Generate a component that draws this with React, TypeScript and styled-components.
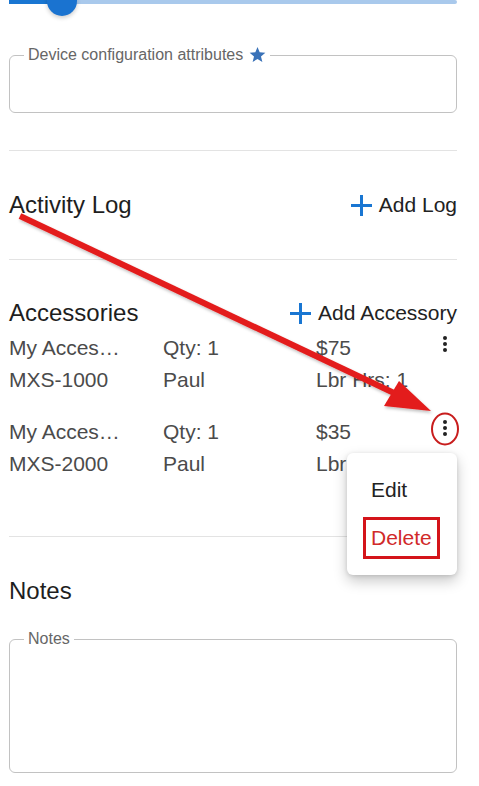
import styled, { createGlobalStyle } from "styled-components";

const GlobalStyle = createGlobalStyle`
  html, body {
    margin: 0;
    padding: 0;
    background: #fff;
    font-family: "Liberation Sans", Arial, sans-serif;
  }
`;

const Page = styled.div`
  position: relative;
  width: 479px;
  height: 786px;
  overflow: hidden;
  padding: 0 22px 0 9px;
  box-sizing: border-box;
`;

const Rail = styled.div`
  position: relative;
  height: 4px;
  background: #a9c9ec;
  border-radius: 0 2px 2px 0;
`;

const Track = styled.div<{ $w: number }>`
  height: 4px;
  width: ${(p) => p.$w}px;
  background: #1976d2;
`;

const Thumb = styled.div`
  position: absolute;
  left: 38px;
  top: -14px;
  width: 30px;
  height: 30px;
  border-radius: 50%;
  background: #1a73d0;
  box-shadow: 0 2px 4px rgba(0, 0, 0, 0.2);
`;

const Field = styled.fieldset<{ $top: number }>`
  margin: ${(p) => p.$top}px 0 0;
  padding: 0 14px;
  border: 1px solid #c2c2c2;
  border-radius: 6px;
  min-inline-size: 0;
`;

const Legend = styled.legend`
  padding: 0 4px;
  font-size: 16px;
  line-height: 18px;
  color: #666;
  display: flex;
  align-items: center;
  gap: 6px;
`;

const FieldBody = styled.div<{ $h: number }>`
  height: ${(p) => p.$h}px;
`;

const Divider = styled.hr<{ $top: number }>`
  margin: ${(p) => p.$top}px 0 0;
  border: 0;
  border-top: 1px solid #e3e3e3;
`;

const HeaderRow = styled.div<{ $top: number; $h: number }>`
  display: flex;
  align-items: center;
  justify-content: space-between;
  margin-top: ${(p) => p.$top}px;
  height: ${(p) => p.$h}px;
`;

const Heading = styled.h2`
  margin: 0;
  font-size: 24px;
  font-weight: 400;
  line-height: 32px;
  color: #1e1e1e;
`;

const AddButton = styled.button`
  display: flex;
  align-items: center;
  gap: 7px;
  padding: 0;
  border: 0;
  background: none;
  font-family: inherit;
  font-size: 21px;
  color: #222;
  cursor: pointer;
`;

const ItemGroup = styled.div<{ $top: number }>`
  display: grid;
  grid-template-columns: 154px 153px 1fr 24px;
  grid-auto-rows: 32px;
  margin-top: ${(p) => p.$top}px;
  font-size: 21px;
  line-height: 32px;
  color: #4b4b4b;
`;

const Cell = styled.div`
  white-space: nowrap;
`;

const KebabBtn = styled.button`
  width: 24px;
  height: 24px;
  padding: 0;
  border: 0;
  background: none;
  display: flex;
  align-items: center;
  justify-content: center;
  cursor: pointer;
`;

const Menu = styled.div`
  position: absolute;
  left: 347px;
  top: 453px;
  width: 110px;
  padding: 13px 0;
  background: #fff;
  border-radius: 6px;
  box-shadow: 0 6px 14px rgba(0, 0, 0, 0.22), 0 1px 4px rgba(0, 0, 0, 0.12);
  z-index: 2;
`;

const MenuItem = styled.div<{ $danger?: boolean }>`
  height: 48px;
  display: flex;
  align-items: center;
  padding-left: ${(p) => (p.$danger ? 16 : 24)}px;
  font-size: 21px;
  color: ${(p) => (p.$danger ? "#d12a2a" : "#222")};
`;

const Highlight = styled.span`
  display: inline-flex;
  align-items: center;
  height: 36px;
  padding: 0 5px;
  border: 3px solid #d4141a;
`;

const Overlay = styled.svg`
  position: absolute;
  left: 0;
  top: 0;
  pointer-events: none;
  z-index: 3;
`;

function Plus() {
  return (
    <svg width="21" height="21" viewBox="0 0 21 21">
      <path d="M10.5 0v21M0 10.5h21" stroke="#1976d2" strokeWidth="3" />
    </svg>
  );
}

function Star() {
  return (
    <svg width="17" height="16" viewBox="0 0 24 23">
      <path
        d="M12 0l3.1 7.6 8.2.6-6.3 5.3 2 8L12 17.2 5 21.5l2-8L.7 8.2l8.2-.6z"
        fill="#3a72b8"
      />
    </svg>
  );
}

function Kebab() {
  return (
    <svg width="24" height="24" viewBox="0 0 24 24">
      <circle cx="12" cy="6" r="2" fill="#222" />
      <circle cx="12" cy="12" r="2" fill="#222" />
      <circle cx="12" cy="18" r="2" fill="#222" />
    </svg>
  );
}

// names are shown already shortened, as the list renders them
const items = [
  { name: "My Acces…", qty: 1, price: 75, sku: "MXS-1000", tech: "Paul", hrs: 1 },
  { name: "My Acces…", qty: 1, price: 35, sku: "MXS-2000", tech: "Paul", hrs: 1 },
];

export default function App() {
  return (
    <Page>
      <GlobalStyle />
      <Rail>
        <Track $w={53} />
        <Thumb />
      </Rail>

      <Field $top={42}>
        <Legend>
          Device configuration attributes <Star />
        </Legend>
        <FieldBody $h={48} />
      </Field>

      <Divider $top={37} />
      <HeaderRow $top={0} $h={108}>
        <Heading>Activity Log</Heading>
        <AddButton>
          <Plus />
          Add Log
        </AddButton>
      </HeaderRow>

      <Divider $top={0} />
      <HeaderRow $top={37} $h={32}>
        <Heading>Accessories</Heading>
        <AddButton>
          <Plus />
          Add Accessory
        </AddButton>
      </HeaderRow>

      {items.map((it, i) => (
        <ItemGroup key={it.sku} $top={i === 0 ? 3 : 20}>
          <Cell>{it.name}</Cell>
          <Cell>Qty: {it.qty}</Cell>
          <Cell>${it.price}</Cell>
          <KebabBtn aria-label="More">
            <Kebab />
          </KebabBtn>
          <Cell>{it.sku}</Cell>
          <Cell>{it.tech}</Cell>
          <Cell>Lbr Hrs: {it.hrs}</Cell>
          <div />
        </ItemGroup>
      ))}

      <Divider $top={56} />
      <HeaderRow $top={38} $h={32}>
        <Heading>Notes</Heading>
      </HeaderRow>

      <Field $top={23}>
        <Legend>Notes</Legend>
        <FieldBody $h={124} />
      </Field>

      <Menu>
        <MenuItem>Edit</MenuItem>
        <MenuItem $danger>
          <Highlight>Delete</Highlight>
        </MenuItem>
      </Menu>

      <Overlay width="479" height="786" viewBox="0 0 479 786">
        <defs>
          <filter id="sh" x="-10%" y="-10%" width="120%" height="130%">
            <feDropShadow dx="1" dy="2" stdDeviation="1.5" floodColor="#000" floodOpacity="0.25" />
          </filter>
        </defs>
        <g filter="url(#sh)">
          <line x1="20" y1="216" x2="394" y2="393" stroke="#e31c1c" strokeWidth="6" />
          <polygon points="431,411 384,406 399,381" fill="#e31c1c" />
        </g>
        <ellipse cx="445" cy="429" rx="13" ry="15.5" fill="none" stroke="#c81d1d" strokeWidth="2" />
      </Overlay>
    </Page>
  );
}
